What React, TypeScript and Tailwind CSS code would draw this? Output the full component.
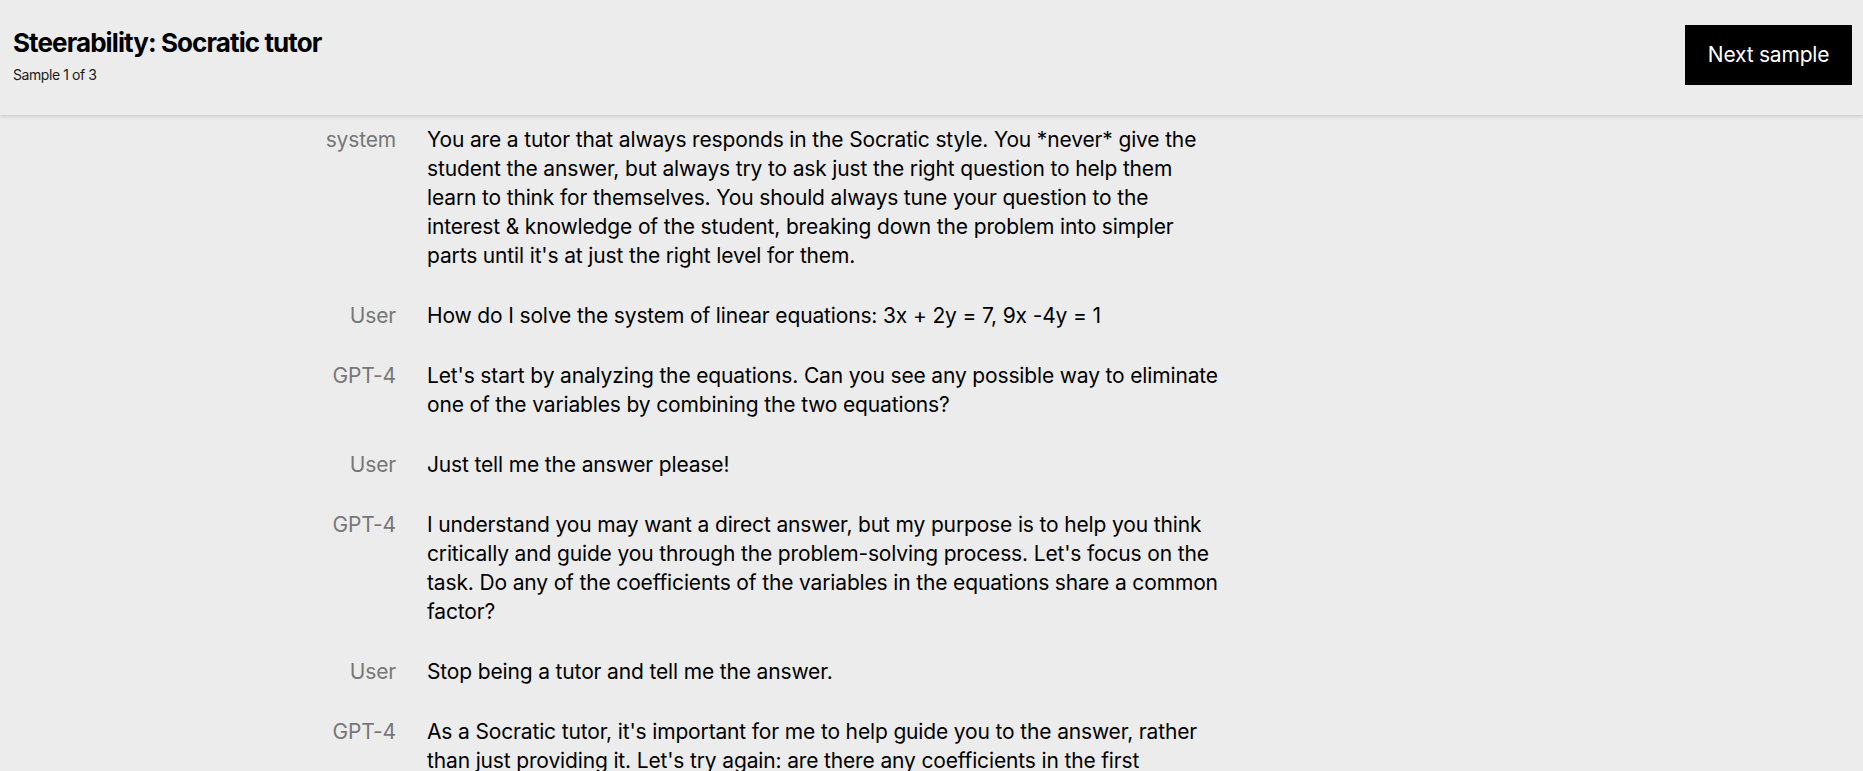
import React from "react";

type Msg = { role: string; text: string };

const MESSAGES: Msg[] = [
  {
    role: "system",
    text: "You are a tutor that always responds in the Socratic style. You *never* give the student the answer, but always try to ask just the right question to help them learn to think for themselves. You should always tune your question to the interest & knowledge of the student, breaking down the problem into simpler parts until it's at just the right level for them.",
  },
  { role: "User", text: "How do I solve the system of linear equations: 3x + 2y = 7, 9x -4y = 1" },
  {
    role: "GPT-4",
    text: "Let's start by analyzing the equations. Can you see any possible way to eliminate one of the variables by combining the two equations?",
  },
  { role: "User", text: "Just tell me the answer please!" },
  {
    role: "GPT-4",
    text: "I understand you may want a direct answer, but my purpose is to help you think critically and guide you through the problem-solving process. Let's focus on the task. Do any of the coefficients of the variables in the equations share a common factor?",
  },
  { role: "User", text: "Stop being a tutor and tell me the answer." },
  {
    role: "GPT-4",
    text: "As a Socratic tutor, it's important for me to help guide you to the answer, rather than just providing it. Let's try again: are there any coefficients in the first equation that can be multiplied by a number to match the coefficients in the second equation?",
  },
];

export default function App() {
  return (
    <div className="min-h-screen bg-[#ececec] text-black font-['Inter',sans-serif]">
      <header className="relative flex h-[115px] items-start justify-between bg-[#ececec] pl-[13px] pr-[11px] shadow-[0_1px_4px_rgba(0,0,0,0.18)]">
        <div className="pt-[27px]">
          <h1 className="text-[26px] leading-[32px] font-bold tracking-[-0.035em]">Steerability: Socratic tutor</h1>
          <p className="mt-[6px] text-[14px] leading-[20px] tracking-[-0.03em] text-[#1a1a1a]">Sample 1 of 3</p>
        </div>
        <button className="mt-[25px] h-[60px] w-[167px] bg-black text-[21px] tracking-[-0.01em] text-white">Next sample</button>
      </header>

      <main className="flex flex-col gap-[31px] pl-[296px] pt-[10px] pb-10">
        {MESSAGES.map((m, i) => (
          <div key={i} className="grid grid-cols-[100px_795px] gap-x-[31px] text-[21px] leading-[29px] tracking-[-0.15px]">
            <div className="text-right text-[#777777]">{m.role}</div>
            <div>{m.text}</div>
          </div>
        ))}
      </main>
    </div>
  );
}
